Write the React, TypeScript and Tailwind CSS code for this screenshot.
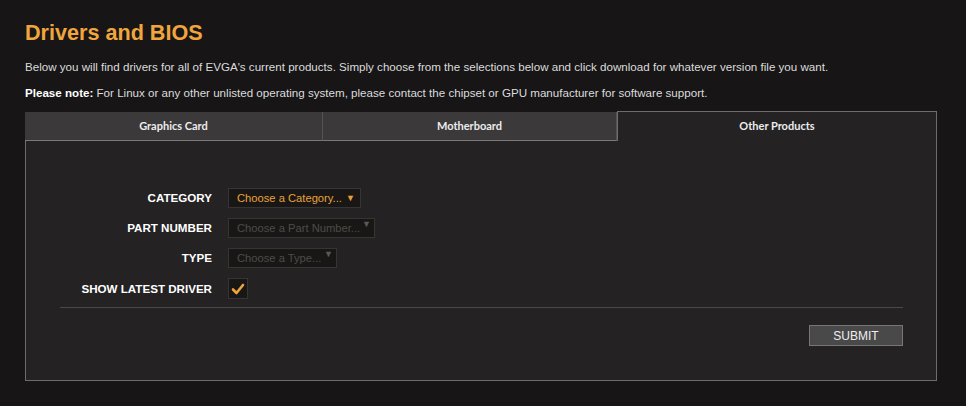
import React from "react";

const tabs = [
  { name: "Graphics Card", active: false, w: "w-[298px]" },
  { name: "Motherboard", active: false, w: "flex-1" },
  { name: "Other Products", active: true, w: "w-[320px]" },
];

function Select({ text, width, active }: { text: string; width: string; active?: boolean }) {
  return (
    <div
      className={`relative h-[20px] ${width} border border-[#363434] bg-[#191716] flex items-center pl-[8px] text-[11.2px] ${
        active ? "text-[#e9a23b]" : "text-[#4d4b4a]"
      }`}
    >
      <span>{text}</span>
      {active ? (
        <span className="absolute right-[5px] top-[5px] text-[9px] leading-none text-[#e9a23b]">▼</span>
      ) : (
        <span className="absolute right-[3px] top-[1px] text-[9px] leading-none text-[#5c5a59]">▼</span>
      )}
    </div>
  );
}

export default function App() {
  return (
    <div className="w-[966px] h-[406px] bg-[#171516] pl-[25px] pt-[21px] font-['Liberation_Sans',Arial,sans-serif] overflow-hidden">
      <h1 className="text-[21.6px] leading-[24px] font-bold text-[#f0a63d]">Drivers and BIOS</h1>
      <p className="mt-[15px] text-[11.6px] leading-[14px] text-[#dcdcdc]">
        Below you will find drivers for all of EVGA's current products. Simply choose from the selections below and click download for whatever version file you want.
      </p>
      <p className="mt-[12px] text-[11.6px] leading-[14px] text-[#dcdcdc]">
        <b className="text-white">Please note:</b> For Linux or any other unlisted operating system, please contact the chipset or GPU manufacturer for software support.
      </p>

      <div className="mt-[11px] w-[912px] h-[270px] flex flex-col">
        {/* tabs */}
        <div className="flex h-[30px] font-['Lato',sans-serif] text-[11px] font-bold text-[#ececec]">
          {tabs.map((t) =>
            t.active ? (
              <div
                key={t.name}
                className={`${t.w} border-t border-l border-r border-[#6e6c6c] bg-[#242223] flex items-center justify-center`}
              >
                {t.name}
              </div>
            ) : (
              <div
                key={t.name}
                className={`${t.w} mt-[1px] bg-[#3b393a] border-b border-[#7a7878] border-r border-r-[#555354] flex items-center justify-center`}
              >
                {t.name}
              </div>
            )
          )}
        </div>

        {/* panel */}
        <div className="flex-1 border-l border-r border-b border-[#6e6c6c] bg-[#242223] pt-[47px] pl-[34px] pr-[33px]">
          <div className="grid grid-cols-[152px_1fr] gap-x-[16px] gap-y-[10px] items-center text-[11.6px]">
            <div className="text-right font-bold text-white">CATEGORY</div>
            <Select text="Choose a Category..." width="w-[133px]" active />

            <div className="text-right font-bold text-white">PART NUMBER</div>
            <Select text="Choose a Part Number..." width="w-[147px]" />

            <div className="text-right font-bold text-white">TYPE</div>
            <Select text="Choose a Type..." width="w-[109px]" />

            <div className="text-right font-bold text-white">SHOW LATEST DRIVER</div>
            <div className="w-[20px] h-[21px] border border-[#363434] bg-[#191716] flex items-center justify-center">
              <svg width="14" height="12" viewBox="0 0 14 12">
                <path d="M2 6.5 L5.5 10 L12 2" fill="none" stroke="#eea43c" strokeWidth="2.6" strokeLinecap="round" strokeLinejoin="round" />
              </svg>
            </div>
          </div>

          <div className="mt-[8px] h-[1px] bg-[#4a4848]" />

          <div className="mt-[17px] flex justify-end">
            <button className="w-[94px] h-[21px] bg-[#4a4949] border border-[#777575] text-[12px] text-[#eeeeee] leading-none">
              SUBMIT
            </button>
          </div>
        </div>
      </div>
    </div>
  );
}
